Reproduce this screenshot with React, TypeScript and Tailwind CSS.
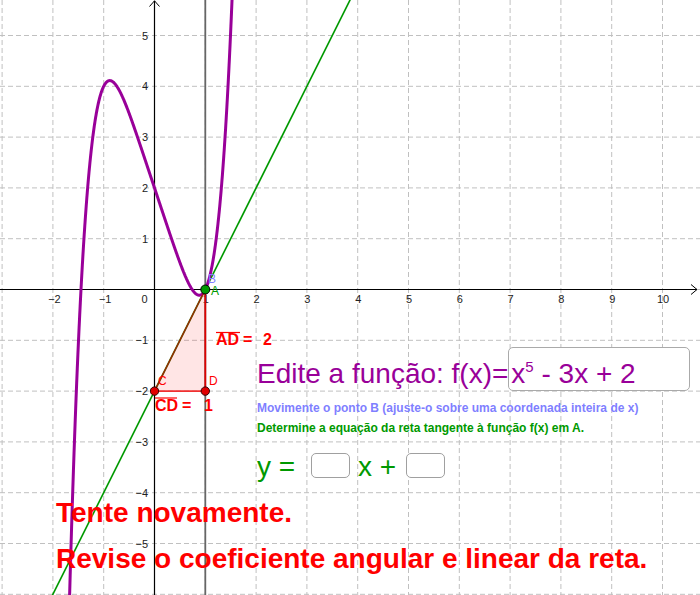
import React from 'react'

// graph coordinates -> screen pixels
const ox = 154.5
const oy = 289.5
const u = 50.8
const X = (x: number) => ox + u * x
const Y = (y: number) => oy - u * y
const f = (x: number) => x ** 5 - 3 * x + 2

const purple = '#990099'
const green = '#009900'
const lavender = '#7f7fff'

function curvePath() {
  const pts: string[] = []
  for (let x = -1.7; x <= 1.56; x += 0.004) {
    pts.push(`${X(x).toFixed(2)},${Y(f(x)).toFixed(2)}`)
  }
  return 'M' + pts.join(' L')
}

function Graph() {
  const vGrid = Array.from({ length: 14 }, (_, i) => i - 3)
  const hGrid = Array.from({ length: 12 }, (_, i) => i - 6)
  const A = { x: X(1), y: Y(0) }
  const C = { x: X(0), y: Y(-2) }
  const D = { x: X(1), y: Y(-2) }

  return (
    <svg width={700} height={595} viewBox="0 0 700 595" className="absolute left-0 top-0">
      {/* grid */}
      {vGrid.map((k) => (
        <line key={'v' + k} x1={X(k)} y1={0} x2={X(k)} y2={595} stroke="#c0c0c0" strokeDasharray="5 3" />
      ))}
      {hGrid.map((k) => (
        <line key={'h' + k} x1={0} y1={Y(k)} x2={700} y2={Y(k)} stroke="#c0c0c0" strokeDasharray="5 3" />
      ))}

      {/* triangle fill */}
      <polygon points={`${A.x},${A.y} ${C.x},${C.y} ${D.x},${D.y}`} fill="#ff0000" fillOpacity={0.1} />

      {/* axes */}
      <line x1={0} y1={oy} x2={697} y2={oy} stroke="#000" strokeWidth={1.2} />
      <polyline points={`691,284.5 697,289.5 691,294.5`} fill="none" stroke="#000" strokeWidth={1} />
      <line x1={ox} y1={1} x2={ox} y2={595} stroke="#000" strokeWidth={1.2} />
      <polyline points={`149.5,6.5 154.5,0.8 159.5,6.5`} fill="none" stroke="#000" strokeWidth={1} />

      {/* axis labels */}
      <g fontFamily="'Liberation Sans', Arial, sans-serif" fontSize={11} fill="#222">
        {vGrid
          .filter((k) => k !== 0 && k >= -2)
          .map((k) => (
            <text key={'xl' + k} x={X(k) + (k < 0 ? 1.5 : 0.5)} y={302.5} textAnchor="middle">
              {k < 0 ? '\u2212' + -k : k}
            </text>
          ))}
        <text x={144.5} y={302.5} textAnchor="middle">0</text>
        {hGrid
          .filter((k) => k !== 0 && k >= -5)
          .map((k) => (
            <text key={'yl' + k} x={148} y={Y(k) + 4} textAnchor="end">
              {k < 0 ? '\u2212' + -k : k}
            </text>
          ))}
      </g>

      {/* vertical line x = 1 */}
      <line x1={X(1)} y1={0} x2={X(1)} y2={595} stroke="#666" strokeWidth={1.8} />

      {/* tangent line y = 2x - 2 */}
      <line x1={X(-3.2)} y1={Y(-8.4)} x2={X(4.2)} y2={Y(6.4)} stroke={green} strokeWidth={1.6} />

      {/* f(x) */}
      <path d={curvePath()} fill="none" stroke={purple} strokeWidth={3} strokeLinejoin="round" />

      {/* triangle edges */}
      <line x1={A.x} y1={A.y} x2={C.x} y2={C.y} stroke="#b01800" strokeWidth={1.6} strokeOpacity={0.85} />
      <line x1={A.x} y1={A.y} x2={D.x} y2={D.y} stroke="#e00000" strokeWidth={1.8} />
      <line x1={C.x} y1={C.y} x2={D.x} y2={D.y} stroke="#f03030" strokeWidth={1.6} />

      {/* points */}
      <circle cx={A.x} cy={A.y} r={4.5} fill={green} stroke="#000" strokeWidth={1} />
      <circle cx={C.x} cy={C.y} r={4.2} fill="#e00000" stroke="#300" strokeWidth={1} />
      <circle cx={D.x} cy={D.y} r={4.2} fill="#e00000" stroke="#300" strokeWidth={1} />

      {/* point labels */}
      <g fontFamily="'Liberation Sans', Arial, sans-serif" fontSize={12}>
        <text x={208} y={283} fill={lavender}>B</text>
        <text x={211} y={295} fill={green}>A</text>
        <text x={158} y={385} fill="#ff0000">C</text>
        <text x={209} y={385} fill="#ff0000">D</text>
      </g>

      {/* segment lengths */}
      <g fontFamily="'Liberation Sans', Arial, sans-serif" fontSize={16} fontWeight="bold" fill="#ff0000">
        <line x1={216} y1={332.5} x2={240} y2={332.5} stroke="#ff0000" strokeWidth={1.2} />
        <text x={216} y={345}>AD</text>
        <text x={243} y={345}>=</text>
        <text x={263} y={345}>2</text>
        <line x1={155} y1={398} x2={177} y2={398} stroke="#ff0000" strokeWidth={1.2} />
        <text x={155} y={411}>CD</text>
        <text x={182} y={411}>=</text>
        <text x={204} y={411}>1</text>
      </g>
    </svg>
  )
}

export default function App() {
  return (
    <div className="relative h-[595px] w-[700px] overflow-hidden bg-white font-['Liberation_Sans',Arial,sans-serif]">
      <Graph />

      {/* instructions panel */}
      <div className="absolute left-[257px] top-[347px] flex flex-col">
        <div className="flex items-start">
          <span className="mt-[13px] whitespace-pre text-[28px] leading-none text-[#990099]">Edite a função: f(x)=</span>
          <div className="h-[44px] w-[182px] rounded-[5px] border-[1.5px] border-[#aaaaaa] bg-white pl-[2px] pt-[12px] text-[28px] leading-none text-[#990099]">
            x<sup className="relative -top-[11px] text-[15px]">5</sup> - 3x + 2
          </div>
        </div>
        <div className="mt-[11px] text-[12px] font-bold leading-none text-[#7f7fff]">
          Movimente o ponto B (ajuste-o sobre uma coordenada inteira de x)
        </div>
        <div className="mt-[8px] text-[12px] font-bold leading-none text-[#009900]">
          Determine a equação da reta tangente à função f(x) em A.
        </div>
        <div className="mt-[19px] flex items-start text-[28px] leading-none text-[#009900]">
          <span className="whitespace-pre">y =</span>
          <div className="ml-[16px] h-[25px] w-[39px] rounded-[5px] border-[1.5px] border-[#a0a0a0] bg-white" />
          <span className="whitespace-pre"> x + </span>
          <div className="ml-[2px] h-[25px] w-[39px] rounded-[5px] border-[1.5px] border-[#a0a0a0] bg-white" />
        </div>
      </div>

      {/* feedback */}
      <div className="absolute left-[56px] top-[499px] flex flex-col text-[28px] font-bold leading-none text-[#ff0000]">
        <div>Tente novamente.</div>
        <div className="mt-[18px]">Revise o coeficiente angular e linear da reta.</div>
      </div>
    </div>
  )
}
